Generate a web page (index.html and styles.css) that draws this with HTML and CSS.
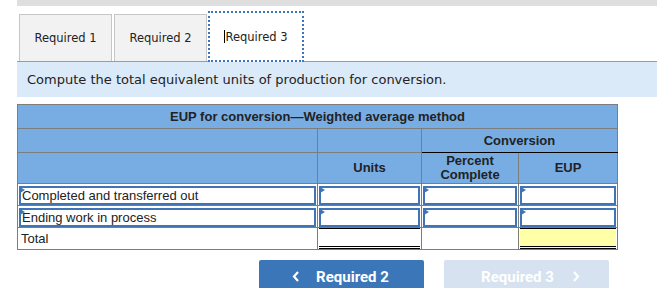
FILE: index.html
```html
<!DOCTYPE html>
<html lang="en">

<head>
  <meta charset="UTF-8">
  <meta name="viewport" content="width=device-width, initial-scale=1.0">
  <title>Required 3</title>
  <link rel="stylesheet" href="styles.css">
</head>

<body>
  <div class="topbar"></div>

  <nav class="tabs">
    <button class="tab">Required 1</button>
    <button class="tab">Required 2</button>
    <button class="tab active"><span class="caret"></span>Required 3</button>
  </nav>

  <p class="prompt">Compute the total equivalent units of production for conversion.</p>

  <table class="eup">
    <tr>
      <th class="title" colspan="4">EUP for conversion&mdash;Weighted average method</th>
    </tr>
    <tr class="short">
      <th></th>
      <th></th>
      <th class="group" colspan="2">Conversion</th>
    </tr>
    <tr class="tall">
      <th class="label"></th>
      <th class="units">Units</th>
      <th class="pct">Percent<br>Complete</th>
      <th class="amt">EUP</th>
    </tr>
    <tr class="entry">
      <td><div class="field text">Completed and transferred out</div></td>
      <td><div class="field"></div></td>
      <td><div class="field"></div></td>
      <td><div class="field"></div></td>
    </tr>
    <tr class="entry">
      <td><div class="field text">Ending work in process</div></td>
      <td><div class="field"></div></td>
      <td><div class="field"></div></td>
      <td><div class="field"></div></td>
    </tr>
    <tr class="total">
      <td class="name">Total</td>
      <td><div class="sum"></div></td>
      <td></td>
      <td><div class="sum yellow"></div></td>
    </tr>
  </table>

  <div class="pager">
    <button class="step prev">
      <svg width="8" height="11" viewBox="0 0 8 11"><path d="M6 1 L2 5.5 L6 10" fill="none" stroke="currentColor" stroke-width="2.2"/></svg>
      Required 2
    </button>
    <button class="step next" disabled>
      Required 3
      <svg width="8" height="11" viewBox="0 0 8 11"><path d="M2 1 L6 5.5 L2 10" fill="none" stroke="currentColor" stroke-width="2.2"/></svg>
    </button>
  </div>
</body>

</html>
```

FILE: styles.css
```css
body {
  margin: 0;
  color: #222;
  font-family: "DejaVu Sans", Verdana, sans-serif;
}

.topbar {
  background: #dedede;
  height: 6px;
  margin-left: 17px;
}

.tabs {
  align-items: flex-end;
  border-bottom: 1px solid #9c9c9c;
  display: flex;
  gap: 2px;
  height: 55px;
  margin-left: 17px;
  padding-left: 2px;

  .tab {
    background: #f2f2f2;
    border: 1px solid #c6c6c6;
    border-bottom: none;
    color: #222;
    font-family: "DejaVu Sans", Verdana, sans-serif;
    font-size: 11.5px;
    height: 47px;
    padding: 0;
    width: 93px;

    &.active {
      background: #fff;
      border: 2px dotted #3e74b8;
      height: 51px;
      margin-bottom: -1px;
      margin-left: -1px;
      position: relative;
      width: 96px;
    }
  }

  .caret {
    background: #000;
    display: inline-block;
    height: 13px;
    vertical-align: -2px;
    width: 1px;
  }
}

.prompt {
  background: #dbeaf8;
  font-size: 13px;
  height: 35px;
  line-height: 35px;
  margin: 0 0 7px 17px;
  padding-left: 10px;
}

.eup {
  border-collapse: collapse;
  font-family: "Liberation Sans", Arial, sans-serif;
  font-size: 13px;
  margin-left: 17px;
  width: 601px;

  th {
    background: #78ade4;
    border: 1px solid #7d7d7d;
    color: #222;
    font-weight: bold;
    line-height: 14px;
    padding: 0;
  }

  .title {
    height: 23px;
  }

  .short th {
    height: 23px;
  }

  .group {
    border-bottom: 1px solid #000;
  }

  .tall th {
    height: 30px;
  }

  .label {
    width: 299px;
  }

  .units {
    width: 103px;
  }

  .pct {
    width: 96px;
  }

  td {
    border: 1px solid #7d7d7d;
    padding: 0;
  }

  .entry td {
    height: 20px;
    padding: 1px 1px 0;
  }

  .field {
    border: 2px solid #3f74b6;
    box-sizing: border-box;
    height: 19px;
    line-height: 15px;
    padding-left: 1px;
    position: relative;

    &::before {
      border-bottom: 3px solid transparent;
      border-left: 5px solid #3f74b6;
      border-top: 3px solid transparent;
      content: "";
      left: -1px;
      position: absolute;
      top: -1px;
    }
  }

  .name {
    padding-left: 3px;
  }

  .total td {
    height: 21px;
  }

  .total td:has(.sum) {
    padding: 0 1px;
  }

  .sum {
    border-bottom: 3px double #000;
    border-top: 1px solid #000;
    box-sizing: border-box;
    height: 21px;

    &.yellow {
      background: #ffffa8;
    }
  }
}

.pager {
  display: flex;
  gap: 20px;
  margin-top: 10px;
  padding-left: 259px;

  .step {
    align-items: center;
    border: none;
    border-radius: 2px;
    color: #fff;
    display: flex;
    font-family: Roboto, "Liberation Sans", sans-serif;
    font-size: 15px;
    font-weight: bold;
    gap: 16px;
    height: 33px;
    justify-content: center;
    padding: 0;
    width: 165px;
  }

  .prev {
    background: #3b76b9;
    padding-right: 2px;
  }

  .next {
    background: #d6e2f0;
    gap: 18px;
    padding-left: 8px;
  }
}
```
